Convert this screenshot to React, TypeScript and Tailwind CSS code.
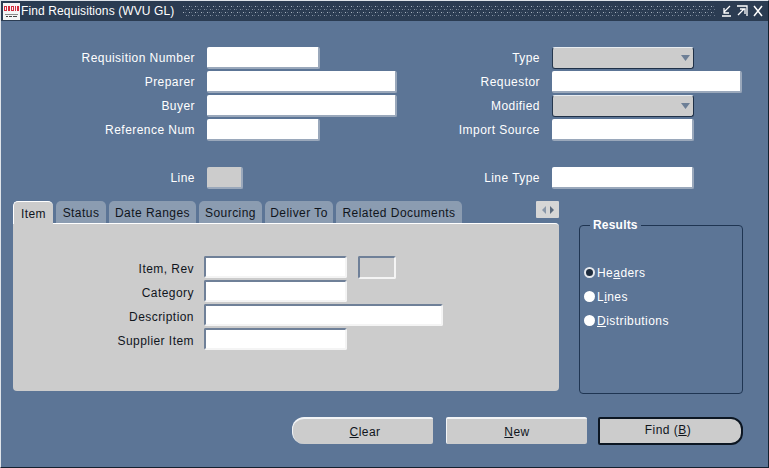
const font = { fontFamily: '"Liberation Sans", Arial, sans-serif' };

function TextField({ w, h = 'h-[22px]' }: { w: string; h?: string }) {
  return (
    <div className={`${w} ${h} shrink-0 bg-white rounded-[2px] border-b-2 border-r-2 border-[#9aa8bb]`} />
  );
}

function ComboField() {
  return (
    <div className="w-[142px] h-[22px] shrink-0 bg-[#cccccc] rounded-[3px] border border-[#1f3047] border-t-[#e8ecf0] border-l-[#26384f] flex items-center justify-end pr-[3px]">
      <svg width="9" height="6" viewBox="0 0 9 6">
        <path d="M0 0h9L4.5 6z" fill="#6d7f96" />
      </svg>
    </div>
  );
}

function FormRow({ label, right, rightLabel, children, className = '' }: { label: string; right: React.ReactNode; rightLabel: string; children: React.ReactNode; className?: string }) {
  return (
    <div className={`flex h-[24px] items-start ${className}`}>
      <div className="w-[194px] text-right leading-[23px] text-white">{label}</div>
      <div className="ml-[12px] w-[190px] shrink-0">{children}</div>
      <div className="w-[143px] text-right leading-[23px] text-white">{rightLabel}</div>
      <div className="ml-[12px]">{right}</div>
    </div>
  );
}

function Tab({ label, active = false, w }: { label: string; active?: boolean; w: string }) {
  return (
    <div
      className={`${w} h-[22px] pt-[2px] flex items-center justify-center rounded-t-[5px] text-[#10151c] ${
        active ? 'bg-[#cccccc] border-t border-l border-white h-[23px] relative z-10 -mb-px' : 'bg-[#8b9cb1]'
      }`}
    >
      {label}
    </div>
  );
}

function PanelRow({ label, children }: { label: string; children: React.ReactNode }) {
  return (
    <div className="flex h-[24px] items-start">
      <div className="w-[181px] text-right leading-[26px] text-[#10151c]">{label}</div>
      <div className="ml-[10px] flex items-start">{children}</div>
    </div>
  );
}

function PanelField({ w }: { w: string }) {
  return <div className={`${w} h-[22px] bg-white rounded-[2px] border-t-2 border-l-2 border-[#6f8098] border-b-2 border-b-[#f4f4f4] border-r-2 border-r-[#f4f4f4]`} />;
}

function Radio({ label, hot, selected = false }: { label: string; hot: number; selected?: boolean }) {
  return (
    <div className="flex h-[24px] items-center text-white">
      <div className={`w-[11px] h-[11px] mb-[2px] shrink-0 rounded-full ${selected ? 'bg-[#1e2c3d] border-2 border-[#e6e9ee]' : 'bg-white'}`} />
      <span className="ml-[2px]">
        {label.slice(0, hot)}
        <span className="underline">{label[hot]}</span>
        {label.slice(hot + 1)}
      </span>
    </div>
  );
}

function ActionButton({ children, className, active = false }: { children: React.ReactNode; className: string; active?: boolean }) {
  return (
    <div
      className={`h-[27px] flex items-center justify-center bg-[#cccccc] text-[#10151c] ${className} ${
        active ? 'border-2 border-[#0c1622] h-[28px] pb-[2px]' : 'border-t-2 border-l border-[#f2f4f6]'
      }`}
    >
      {children}
    </div>
  );
}

export default function App() {
  return (
    <div style={font} className="w-[769px] h-[468px] overflow-hidden bg-[#5c7596] text-[12px] tracking-[0.45px] flex flex-col border-t border-l border-[#dfe4ea] border-b border-b-[#14202e] border-r border-r-[#14202e]">
      {/* Title bar */}
      <div className="h-[20px] shrink-0 bg-[#2b3c52] flex items-center pl-[2px] pr-[5px] text-white">
        <svg width="17" height="17" viewBox="0 0 17 17" className="shrink-0">
          <rect width="17" height="17" fill="#f4f4f4" />
          <path d="M1 3h3v5H1zM5 3h2v5H5zM8 3h3v5H8zM12 3h1v5h-1zM14 3h2v5h-2z" fill="#d22a3c" />
          <path d="M2 4h1v3H2zM9 4h1v3H9z" fill="#f4f4f4" />
          <path d="M2 11h13v1H2z" fill="#8a8a8a" />
          <path d="M3 13h2v1H3zM6 13h3v1H6zM10 13h4v1h-4z" fill="#444" />
        </svg>
        <span className="ml-px whitespace-nowrap tracking-[0.1px]">Find Requisitions (WVU GL)</span>
        <svg className="ml-[9px] flex-1 h-[12px]" height="12">
          <defs>
            <pattern id="dots" width="6" height="6" patternUnits="userSpaceOnUse">
              <rect x="0" y="1" width="1" height="1" fill="#aab4c0" />
              <rect x="3" y="4" width="1" height="1" fill="#8895a5" />
              <rect x="2" y="1" width="1" height="1" fill="#5c6b7e" />
              <rect x="5" y="4" width="1" height="1" fill="#5c6b7e" />
            </pattern>
          </defs>
          <rect width="100%" height="100%" fill="url(#dots)" />
        </svg>
        <svg width="42" height="14" viewBox="0 0 42 14" className="ml-[6px] shrink-0" fill="none" stroke="#fff" strokeWidth="1.3">
          <path d="M1 12h9M9 2L3 8M3 4v5h5" />
          <path d="M16 2h10v10M17 11l6-6M19 5h5v5" />
          <path d="M33 2l8 10M41 2l-8 10" strokeWidth="1.5" />
        </svg>
      </div>

      {/* Header fields */}
      <div className="mt-[26px] shrink-0">
        <FormRow label="Requisition Number" rightLabel="Type" right={<ComboField />}>
          <TextField w="w-[113px]" />
        </FormRow>
        <FormRow label="Preparer" rightLabel="Requestor" right={<TextField w="w-[190px]" />}>
          <TextField w="w-[190px]" />
        </FormRow>
        <FormRow label="Buyer" rightLabel="Modified" right={<ComboField />}>
          <TextField w="w-[190px]" />
        </FormRow>
        <FormRow label="Reference Num" rightLabel="Import Source" right={<TextField w="w-[142px]" />}>
          <TextField w="w-[113px]" />
        </FormRow>
        <FormRow className="mt-[24px]" label="Line" rightLabel="Line Type" right={<TextField w="w-[142px]" />}>
          <div className="w-[36px] h-[22px] bg-[#cccccc] rounded-[2px] border-b-2 border-r-2 border-[#9aa8bb]" />
        </FormRow>
      </div>

      {/* Tabs and results */}
      <div className="flex mt-[10px] ml-[12px] shrink-0">
        <div className="w-[546px]">
          <div className="flex items-end gap-[3px] h-[22px] relative">
            <Tab label="Item" active w="w-[40px]" />
            <Tab label="Status" w="w-[50px]" />
            <Tab label="Date Ranges" w="w-[87px]" />
            <Tab label="Sourcing" w="w-[63px]" />
            <Tab label="Deliver To" w="w-[68px]" />
            <Tab label="Related Documents" w="w-[126px]" />
            <div className="absolute right-0 top-0 w-[23px] h-[17px] bg-[#d6d6d6] flex items-center justify-center rounded-[1px]">
              <svg width="14" height="8" viewBox="0 0 14 8">
                <path d="M5 0v8L1 4z" fill="#8a98aa" />
                <path d="M9 0v8l4-4z" fill="#5c6b7e" />
              </svg>
            </div>
          </div>
          <div className="h-[168px] bg-[#cccccc] rounded-b-[4px] rounded-tr-[4px] border-t border-white pt-[32px]">
            <PanelRow label="Item, Rev">
              <PanelField w="w-[143px]" />
              <div className="ml-[11px] w-[38px] h-[23px] bg-[#cccccc] border-t-2 border-l-2 border-[#6f8098] border-b-2 border-b-[#f4f4f4] border-r-2 border-r-[#f4f4f4] rounded-[2px]" />
            </PanelRow>
            <PanelRow label="Category">
              <PanelField w="w-[143px]" />
            </PanelRow>
            <PanelRow label="Description">
              <PanelField w="w-[239px]" />
            </PanelRow>
            <PanelRow label="Supplier Item">
              <PanelField w="w-[143px]" />
            </PanelRow>
          </div>
        </div>

        {/* Results group */}
        <div className="ml-[20px] mt-[24px] w-[164px] h-[169px] border border-[#1f3552] rounded-[4px] relative pt-[35px] pl-[4px]">
          <div className="absolute left-[10px] top-[-8px] px-[3px] bg-[#5c7596] text-white font-bold leading-[14px] tracking-[0.2px]">Results</div>
          <Radio label="Headers" hot={2} selected />
          <Radio label="Lines" hot={1} />
          <Radio label="Distributions" hot={0} />
        </div>
      </div>

      {/* Buttons */}
      <div className="flex ml-[291px] mt-[23px] shrink-0">
        <ActionButton className="w-[141px] pl-[4px] rounded-l-[12px] rounded-r-[2px]">
          <span><span className="underline">C</span>lear</span>
        </ActionButton>
        <ActionButton className="w-[141px] ml-[13px] rounded-[2px]">
          <span><span className="underline">N</span>ew</span>
        </ActionButton>
        <ActionButton active className="w-[145px] ml-[11px] pr-[5px] rounded-r-[12px] rounded-l-[2px]">
          <span>Find (<span className="underline">B</span>)</span>
        </ActionButton>
      </div>
    </div>
  );
}
